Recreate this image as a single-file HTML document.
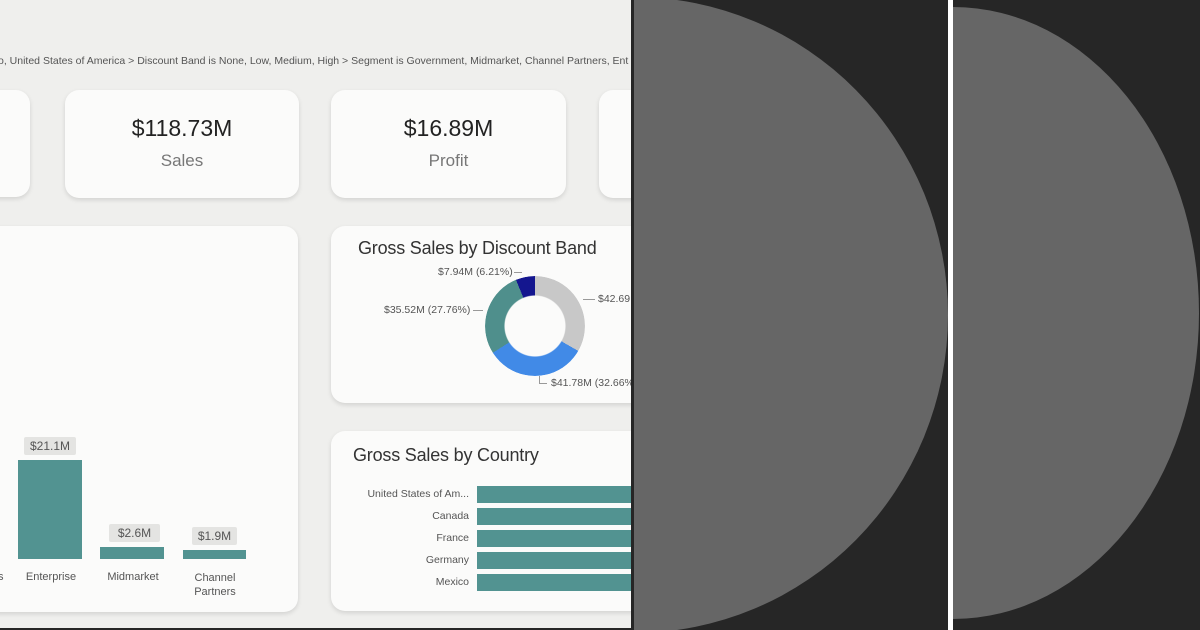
<!DOCTYPE html>
<html><head><style>
*{margin:0;padding:0;box-sizing:border-box}
body{width:1200px;height:630px;overflow:hidden;background:#262626;font-family:"Liberation Sans",sans-serif;position:relative}
#dash{position:absolute;left:0;top:0;width:631px;height:628px;background:#efefed;overflow:hidden}
.card{position:absolute;background:#fbfbfa;border-radius:14px;box-shadow:0 2px 5px rgba(0,0,0,.12)}
.t{position:absolute;white-space:nowrap}
.kv{font-size:23px;color:#222;width:100%;text-align:center;top:25px}
.kl{font-size:17px;color:#777;width:100%;text-align:center;top:61px}
.bar{position:absolute;background:#529391}
.lb{position:absolute;background:#e4e4e2;color:#555;font-size:12px;text-align:center;line-height:18px;border-radius:2px}
.xl{font-size:11px;color:#555;text-align:center}
.cl{font-size:10.5px;color:#555;text-align:right;width:130px;left:339px}
.dl{font-size:10.5px;color:#555}
.ti{font-size:18px;color:#333;letter-spacing:-0.2px}
</style></head><body>
<div id="dash">
<div class="t" style="left:-2px;top:55px;font-size:10.5px;color:#555">o, United States of America &gt; Discount Band is None, Low, Medium, High &gt; Segment is Government, Midmarket, Channel Partners, Ent</div>
<div class="card" style="left:-20px;top:90px;width:50px;height:107px"></div>
<div class="card" style="left:65px;top:90px;width:234px;height:108px"><div class="t kv">$118.73M</div><div class="t kl">Sales</div></div>
<div class="card" style="left:331px;top:90px;width:235px;height:108px"><div class="t kv">$16.89M</div><div class="t kl">Profit</div></div>
<div class="card" style="left:599px;top:90px;width:60px;height:108px"></div>
<div class="card" style="left:-20px;top:226px;width:318px;height:386px"></div>
<div class="bar" style="left:18px;top:460px;width:64px;height:99px"></div>
<div class="lb" style="left:24px;top:437px;width:52px">$21.1M</div>
<div class="bar" style="left:100px;top:547px;width:64px;height:12px"></div>
<div class="lb" style="left:109px;top:524px;width:51px">$2.6M</div>
<div class="bar" style="left:183px;top:550px;width:63px;height:9px"></div>
<div class="lb" style="left:192px;top:527px;width:45px">$1.9M</div>
<div class="t xl" style="left:-2px;top:571px">s</div>
<div class="t xl" style="left:20px;top:571px;width:62px">Enterprise</div>
<div class="t xl" style="left:102px;top:571px;width:62px">Midmarket</div>
<div class="t xl" style="left:184px;top:571px;width:62px;line-height:14px">Channel<br>Partners</div>
<div class="card" style="left:331px;top:226px;width:320px;height:177px"></div>
<div class="t ti" style="left:358px;top:238px">Gross Sales by Discount Band</div>
<div style="position:absolute;left:485px;top:276px;width:100px;height:100px;border-radius:50%;background:conic-gradient(#c8c8c8 0 120deg,#418ae7 120deg 237.6deg,#4f8f8c 237.6deg 337.6deg,#14168f 337.6deg 360deg);-webkit-mask:radial-gradient(circle,transparent 30px,#000 31px);mask:radial-gradient(circle,transparent 30px,#000 31px)"></div>
<div class="t dl" style="left:438px;top:266px">$7.94M (6.21%)</div>
<div style="position:absolute;left:514px;top:272px;width:8px;height:1px;background:#999"></div>
<div class="t dl" style="left:384px;top:304px">$35.52M (27.76%)</div>
<div style="position:absolute;left:473px;top:310px;width:10px;height:1px;background:#999"></div>
<div class="t dl" style="left:598px;top:293px">$42.69</div>
<div style="position:absolute;left:583px;top:299px;width:12px;height:1px;background:#999"></div>
<div class="t dl" style="left:551px;top:377px">$41.78M (32.66%</div>
<div style="position:absolute;left:539px;top:376px;width:1px;height:7px;background:#999"></div>
<div style="position:absolute;left:539px;top:383px;width:8px;height:1px;background:#999"></div>
<div class="card" style="left:331px;top:431px;width:320px;height:180px"></div>
<div class="t ti" style="left:353px;top:445px">Gross Sales by Country</div>
<div class="t cl" style="top:488px">United States of Am...</div>
<div class="t cl" style="top:510px">Canada</div>
<div class="t cl" style="top:532px">France</div>
<div class="t cl" style="top:554px">Germany</div>
<div class="t cl" style="top:576px">Mexico</div>
<div class="bar" style="left:477px;top:486px;width:160px;height:17px"></div>
<div class="bar" style="left:477px;top:508px;width:160px;height:17px"></div>
<div class="bar" style="left:477px;top:530px;width:160px;height:17px"></div>
<div class="bar" style="left:477px;top:552px;width:160px;height:17px"></div>
<div class="bar" style="left:477px;top:574px;width:160px;height:17px"></div>
</div>
<svg style="position:absolute;left:634px;top:0" width="314" height="630">
<ellipse cx="0" cy="315" rx="314" ry="318" fill="#666"/>
</svg>
<div style="position:absolute;left:948px;top:0;width:5px;height:630px;background:#fff"></div>
<svg style="position:absolute;left:953px;top:0" width="247" height="630">
<ellipse cx="0" cy="313" rx="246" ry="306" fill="#666"/>
</svg>
</body></html>
